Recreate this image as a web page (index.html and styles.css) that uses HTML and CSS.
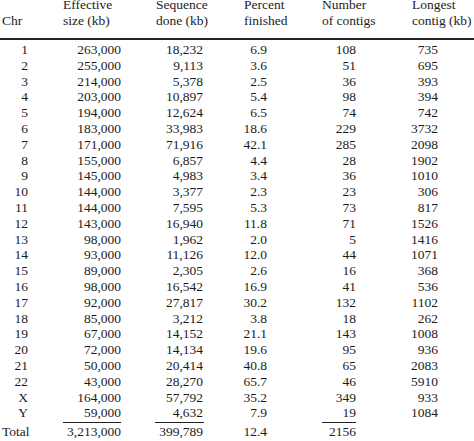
FILE: index.html
```html
<!DOCTYPE html>
<html>
<head>
<meta charset="utf-8">
<link rel="stylesheet" href="styles.css">
</head>
<body>
<table class="t">
<colgroup>
<col class="c1"><col class="c2"><col class="c3"><col class="c4"><col class="c5"><col class="c6"><col class="c7">
</colgroup>
<thead>
<tr>
<th class="h1">Chr</th>
<th class="h2">Effective<br>size (kb)</th>
<th class="h3">Sequence<br>done (kb)</th>
<th class="h4">Percent<br>finished</th>
<th class="h5">Number<br>of contigs</th>
<th class="h6">Longest<br>contig (kb)</th>
<th></th>
</tr>
</thead>
<tbody>
<tr class="first"><td>1</td><td>263,000</td><td>18,232</td><td>6.9</td><td>108</td><td>735</td><td></td></tr>
<tr><td>2</td><td>255,000</td><td>9,113</td><td>3.6</td><td>51</td><td>695</td><td></td></tr>
<tr><td>3</td><td>214,000</td><td>5,378</td><td>2.5</td><td>36</td><td>393</td><td></td></tr>
<tr><td>4</td><td>203,000</td><td>10,897</td><td>5.4</td><td>98</td><td>394</td><td></td></tr>
<tr><td>5</td><td>194,000</td><td>12,624</td><td>6.5</td><td>74</td><td>742</td><td></td></tr>
<tr><td>6</td><td>183,000</td><td>33,983</td><td>18.6</td><td>229</td><td>3732</td><td></td></tr>
<tr><td>7</td><td>171,000</td><td>71,916</td><td>42.1</td><td>285</td><td>2098</td><td></td></tr>
<tr><td>8</td><td>155,000</td><td>6,857</td><td>4.4</td><td>28</td><td>1902</td><td></td></tr>
<tr><td>9</td><td>145,000</td><td>4,983</td><td>3.4</td><td>36</td><td>1010</td><td></td></tr>
<tr><td>10</td><td>144,000</td><td>3,377</td><td>2.3</td><td>23</td><td>306</td><td></td></tr>
<tr><td>11</td><td>144,000</td><td>7,595</td><td>5.3</td><td>73</td><td>817</td><td></td></tr>
<tr><td>12</td><td>143,000</td><td>16,940</td><td>11.8</td><td>71</td><td>1526</td><td></td></tr>
<tr><td>13</td><td>98,000</td><td>1,962</td><td>2.0</td><td>5</td><td>1416</td><td></td></tr>
<tr><td>14</td><td>93,000</td><td>11,126</td><td>12.0</td><td>44</td><td>1071</td><td></td></tr>
<tr><td>15</td><td>89,000</td><td>2,305</td><td>2.6</td><td>16</td><td>368</td><td></td></tr>
<tr><td>16</td><td>98,000</td><td>16,542</td><td>16.9</td><td>41</td><td>536</td><td></td></tr>
<tr><td>17</td><td>92,000</td><td>27,817</td><td>30.2</td><td>132</td><td>1102</td><td></td></tr>
<tr><td>18</td><td>85,000</td><td>3,212</td><td>3.8</td><td>18</td><td>262</td><td></td></tr>
<tr><td>19</td><td>67,000</td><td>14,152</td><td>21.1</td><td>143</td><td>1008</td><td></td></tr>
<tr><td>20</td><td>72,000</td><td>14,134</td><td>19.6</td><td>95</td><td>936</td><td></td></tr>
<tr><td>21</td><td>50,000</td><td>20,414</td><td>40.8</td><td>65</td><td>2083</td><td></td></tr>
<tr><td>22</td><td>43,000</td><td>28,270</td><td>65.7</td><td>46</td><td>5910</td><td></td></tr>
<tr><td>X</td><td>164,000</td><td>57,792</td><td>35.2</td><td>349</td><td>933</td><td></td></tr>
<tr><td>Y</td><td>59,000</td><td>4,632</td><td>7.9</td><td>19</td><td>1084</td><td></td></tr>
<tr class="rule"><td></td><td><div class="ln ln2"></div></td><td><div class="ln ln3"></div></td><td></td><td><div class="ln ln5"></div></td><td></td><td></td></tr>
<tr class="total"><td class="lbl">Total</td><td>3,213,000</td><td>399,789</td><td>12.4</td><td>2156</td><td></td><td></td></tr>
</tbody>
</table>
</body>
</html>
```

FILE: styles.css
```css
html, body {
  margin: 0;
  padding: 0;
  background: #ffffff;
}
body {
  width: 474px;
  height: 441px;
  overflow: hidden;
  font-family: "Liberation Serif", "Times New Roman", serif;
  font-size: 13.5px;
  color: #1c1c1c;
}
.t {
  table-layout: fixed;
  border-collapse: separate;
  border-spacing: 0;
  width: 474px;
  margin-top: -3px;
}
.c1 { width: 28px; }
.c2 { width: 93px; }
.c3 { width: 82px; }
.c4 { width: 64px; }
.c5 { width: 89px; }
.c6 { width: 82px; }
.c7 { width: 36px; }

th {
  font-weight: normal;
  text-align: left;
  white-space: nowrap;
  overflow: visible;
  line-height: 15.7px;
  padding: 0 0 10px 0;
  vertical-align: bottom;
  border-bottom: 2px solid #222;
}
.h1 { padding-left: 2px; }
.h2 { padding-left: 35px; }
.h3 { padding-left: 35px; }
.h4 { padding-left: 41px; }
.h5 { padding-left: 55px; }
.h6 { padding-left: 56px; }

td {
  padding: 0;
  text-align: right;
  white-space: nowrap;
  line-height: 15.8px;
}
.first td { padding-top: 1.7px; }

.rule td {
  height: 3.2px;
  line-height: 0;
  vertical-align: top;
}
.ln {
  margin-top: 1px;
  border-top: 1.3px solid #222;
  height: 0;
}
.ln2 { margin-left: 35px; }
.ln3 { margin-left: 34px; margin-right: -1px; }
.ln5 { margin-left: 55px; }

.total td.lbl {
  text-align: left;
  padding-left: 2px;
}
```
